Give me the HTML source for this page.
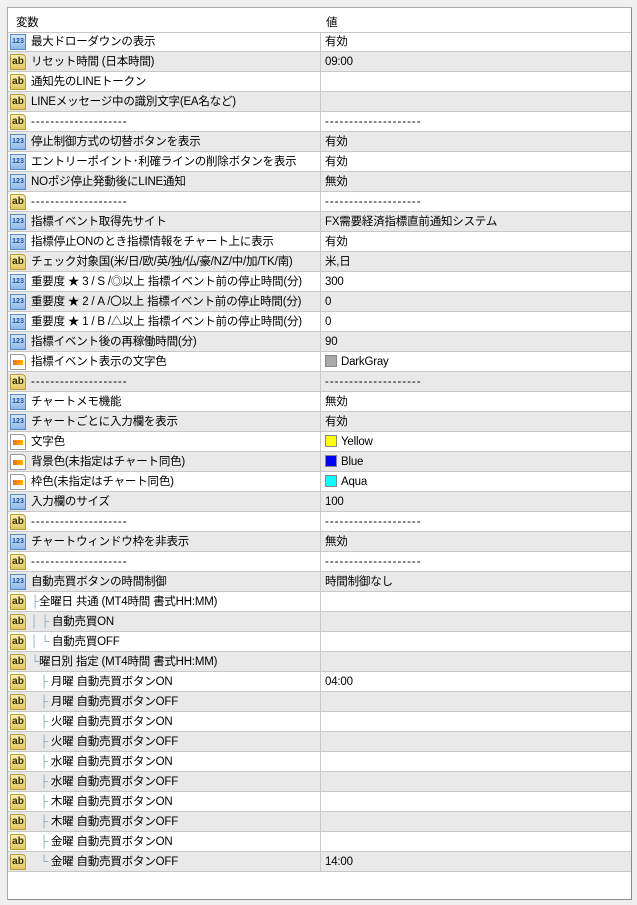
<!DOCTYPE html>
<html><head><meta charset="utf-8">
<style>
body{margin:0;width:637px;height:905px;background:#f0f0f0;font-family:"Liberation Sans","Noto Sans CJK JP",sans-serif;font-size:11.5px;letter-spacing:-0.2px;color:#000;overflow:hidden;position:relative}
#f{position:absolute;left:7px;top:7px;width:623px;height:891px;background:#fff;border:1px solid #8a8a8f;border-top-color:#aaa;border-left-color:#aaa}
.r{position:absolute;left:0;width:623px;height:19px;border-bottom:1px solid #c8c8c8}
.g{background:#e9e9e9}
.n{position:absolute;left:23px;top:0;line-height:21px;white-space:pre}
.v{position:absolute;left:312px;top:0;height:20px;border-left:1px solid #c8c8c8;padding-left:4px;line-height:21px;white-space:pre;width:300px}
.i{position:absolute;left:2px;top:2px;width:16px;height:16px;box-sizing:border-box;font-size:8px;font-weight:bold;text-align:center;line-height:14px;letter-spacing:0}
.n123{background:linear-gradient(#d6e7f8,#8fb8e6);border:1px solid #5a8ac6;color:#1b4f9a;font-size:7px}
.ab{background:linear-gradient(#f7eeb0,#e0c860);border:1px solid #b89a3a;color:#3a2d00;font-size:10px;border-radius:1px 4px 1px 1px}
.col{background:#fff;border:1px solid #999;border-radius:1px 4px 1px 1px}
.col:after{content:"";position:absolute;left:2px;top:5px;width:10px;height:5px;background:linear-gradient(90deg,#f60,#fb0)}
.sw{display:inline-block;width:10px;height:10px;border:1px solid #888;vertical-align:-2px;margin-right:4px}
.h{position:absolute;left:0;top:0;width:623px;height:24px;border-bottom:1px solid #c8c8c8}
.t{color:#8ab}
.ds{letter-spacing:1px}
</style></head><body>
<div id="f">
<div class="h"><span style="position:absolute;left:8px;top:6px">変数</span><span style="position:absolute;left:318px;top:6px">値</span></div>
<div id="rows"></div>
</div>
<script>
var D='<span class=ds>--------------------</span>';
var d=[
["1","最大ドローダウンの表示","有効"],
["a","リセット時間 (日本時間)","09:00"],
["a","通知先のLINEトークン",""],
["a","LINEメッセージ中の識別文字(EA名など)",""],
["a",D,D],
["1","停止制御方式の切替ボタンを表示","有効"],
["1","エントリーポイント･利確ラインの削除ボタンを表示","有効"],
["1","NOポジ停止発動後にLINE通知","無効"],
["a",D,D],
["1","指標イベント取得先サイト","FX需要経済指標直前通知システム"],
["1","指標停止ONのとき指標情報をチャート上に表示","有効"],
["a","チェック対象国(米/日/欧/英/独/仏/豪/NZ/中/加/TK/南)","米,日"],
["1","重要度 ★ 3 / S /◎以上 指標イベント前の停止時間(分)","300"],
["1","重要度 ★ 2 / A /〇以上 指標イベント前の停止時間(分)","0"],
["1","重要度 ★ 1 / B /△以上 指標イベント前の停止時間(分)","0"],
["1","指標イベント後の再稼働時間(分)","90"],
["c","指標イベント表示の文字色","#a9a9a9|DarkGray"],
["a",D,D],
["1","チャートメモ機能","無効"],
["1","チャートごとに入力欄を表示","有効"],
["c","文字色","#ffff00|Yellow"],
["c","背景色(未指定はチャート同色)","#0000ff|Blue"],
["c","枠色(未指定はチャート同色)","#00ffff|Aqua"],
["1","入力欄のサイズ","100"],
["a",D,D],
["1","チャートウィンドウ枠を非表示","無効"],
["a",D,D],
["1","自動売買ボタンの時間制御","時間制御なし"],
["a","<span class=t>├</span>全曜日 共通 (MT4時間 書式HH:MM)",""],
["a","<span class=t>│ ├</span> 自動売買ON",""],
["a","<span class=t>│ └</span> 自動売買OFF",""],
["a","<span class=t>└</span>曜日別 指定 (MT4時間 書式HH:MM)",""],
["a","<span class=t>   ├</span> 月曜 自動売買ボタンON","04:00"],
["a","<span class=t>   ├</span> 月曜 自動売買ボタンOFF",""],
["a","<span class=t>   ├</span> 火曜 自動売買ボタンON",""],
["a","<span class=t>   ├</span> 火曜 自動売買ボタンOFF",""],
["a","<span class=t>   ├</span> 水曜 自動売買ボタンON",""],
["a","<span class=t>   ├</span> 水曜 自動売買ボタンOFF",""],
["a","<span class=t>   ├</span> 木曜 自動売買ボタンON",""],
["a","<span class=t>   ├</span> 木曜 自動売買ボタンOFF",""],
["a","<span class=t>   ├</span> 金曜 自動売買ボタンON",""],
["a","<span class=t>   └</span> 金曜 自動売買ボタンOFF","14:00"]];
var h="";
d.forEach(function(r,k){
var ic=r[0]=="1"?'<div class="i n123">123</div>':r[0]=="a"?'<div class="i ab">ab</div>':'<div class="i col"></div>';
var v=r[2];
if(r[0]=="c"){var p=v.split("|");v='<span class="sw" style="background:'+p[0]+'"></span>'+p[1];}
h+='<div class="r'+(k%2?' g':'')+'" style="top:'+(24+k*20)+'px">'+ic+'<div class="n">'+r[1]+'</div><div class="v">'+v+'</div></div>';
});
document.getElementById("rows").innerHTML=h;
</script>
</body></html>
